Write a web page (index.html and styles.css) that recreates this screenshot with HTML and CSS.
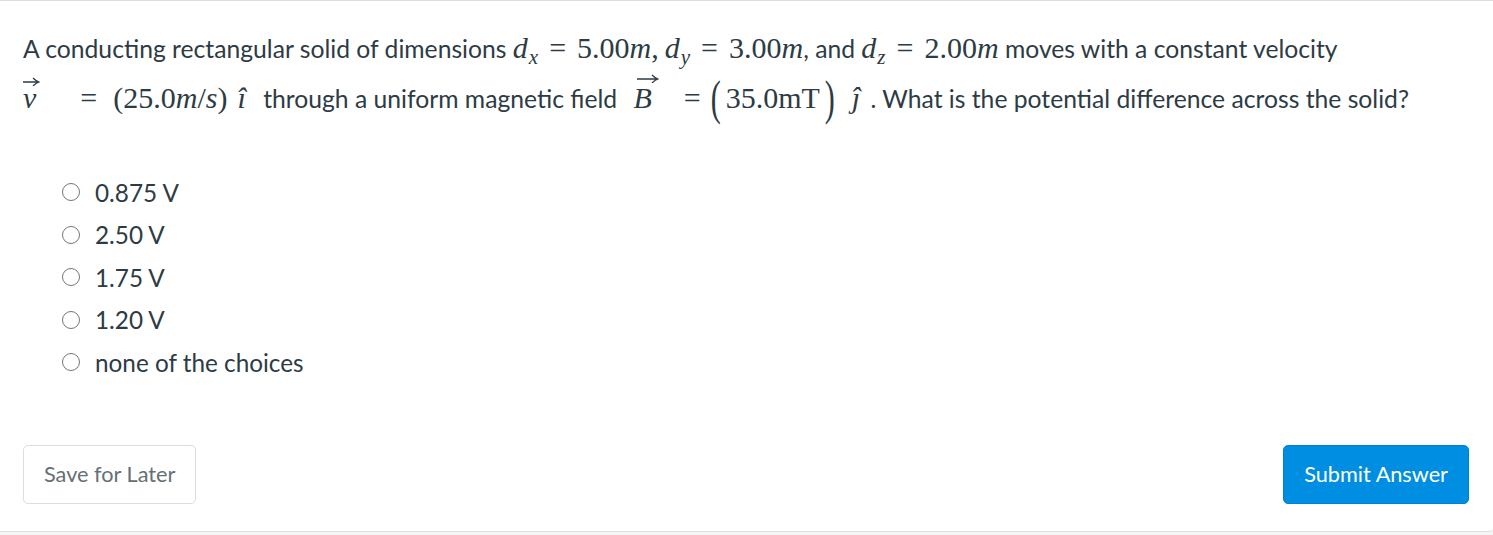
FILE: index.html
```html
<!DOCTYPE html>
<html lang="en">

<head>
    <meta charset="UTF-8">
    <title>Question</title>
    <link rel="stylesheet" href="styles.css">
</head>

<body>
    <div class="card">
        <div class="question-text">
            <p>
                A conducting rectangular solid of dimensions
                <span class="math"><i>d</i><sub><i>x</i></sub><span class="eq">=</span>5.00<i>m</i>,&thinsp;<i>d</i><sub><i>y</i></sub><span class="eq">=</span>3.00<i>m</i></span>,
                and <span class="math"><i>d</i><sub><i>z</i></sub><span class="eq">=</span>2.00<i>m</i></span> moves with a constant velocity
                <br>
                <span class="math"><span class="vec v"><i>v</i><svg class="arrow" width="17" height="9" viewBox="0 0 17 9"><path d="M0 5 H15 M10 1 Q13 4 16 5 Q13 6 10 9" fill="none" stroke="#2d3b45" stroke-width="1.3"/></svg></span><span class="eq wide">=</span>(25.0<i>m</i>/<i>s</i>)<i class="hat i">î</i></span>
                <span class="after-hat">through a uniform magnetic field</span>
                <span class="math b-math"><span class="vec b"><i>B</i><svg class="arrow" width="22" height="9" viewBox="0 0 22 9"><path d="M0 5 H20 M15 1 Q18 4 21 5 Q18 6 15 9" fill="none" stroke="#2d3b45" stroke-width="1.3"/></svg></span><span class="eq b-eq">=</span><span class="big">(</span>35.0mT<span class="big">)</span><i class="hat j">ĵ</i></span>
                <span class="after-j">. What is the potential difference across the solid?</span>
            </p>
        </div>

        <div class="answers">
            <label><input type="radio" name="q1" value="a"> 0.875 V</label>
            <label><input type="radio" name="q1" value="b"> 2.50 V</label>
            <label><input type="radio" name="q1" value="c"> 1.75 V</label>
            <label><input type="radio" name="q1" value="d"> 1.20 V</label>
            <label><input type="radio" name="q1" value="e"> none of the choices</label>
        </div>

        <div class="actions">
            <button class="btn">Save for Later</button>
            <button class="btn primary">Submit Answer</button>
        </div>
    </div>
</body>

</html>
```

FILE: styles.css
```css
body {
    margin: 0;
    font-family: Lato, "Open Sans", sans-serif;
    color: #2d3b45;
    background-color: #f5f5f5;
}

.card {
    background: white;
    border-top: 1px solid #dddddd;
    border-bottom: 1px solid #dddddd;
    border-bottom-right-radius: 4px;
    height: 530px;
}

.question-text {
    padding: 22px 23px 0 23px;
    font-size: 24.7px;
}

.question-text p {
    margin: 0;
    line-height: 49px;
}

.math {
    font-family: "Liberation Serif", "DejaVu Serif", serif;
    font-size: 30px;
    white-space: nowrap;
}

.math sub {
    font-size: 21px;
    vertical-align: -6px;
    line-height: 0;
    margin-left: 1px;
}

.math .eq {
    margin: 0 11px;
}

.math .eq.wide {
    margin: 0 16px 0 44px;
}

.math .eq.b-eq {
    margin: 0 5px 0 32px;
}

.vec {
    position: relative;
    display: inline-block;
    line-height: 1;
}

/* arrow sits over the letter */
.vec .arrow {
    position: absolute;
    left: 0;
    top: -6px;
}

.vec.b .arrow {
    left: 4px;
    top: -9px;
}

.b-math {
    margin-left: 10px;
}

.hat.i {
    margin-left: 10px;
}

.hat.j {
    margin-left: 12px;
}

.after-hat {
    margin-left: 11px;
}

.big {
    display: inline-block;
    font-size: 30px;
    transform: scaleY(1.6);
    line-height: 1;
    margin: 0 5px;
}

.after-j {
    margin-left: 4px;
}

.answers {
    display: flex;
    flex-direction: column;
    padding: 48px 0 0 62px;
}

.answers label {
    font-size: 24.3px;
    height: 42.5px;
    display: flex;
    align-items: center;
}

input[type="radio"] {
    appearance: none;
    width: 18px;
    height: 18px;
    border: 1.5px solid #767676;
    border-radius: 50%;
    margin: 0 15px 0 0;
    box-sizing: border-box;
}

.actions {
    display: flex;
    justify-content: space-between;
    padding: 61px 24px 0 23px;
}

.btn {
    font-family: Lato, sans-serif;
    font-size: 21.7px;
    height: 59px;
    padding: 0 20px;
    background: white;
    color: #666f76;
    border: 1px solid #dddddd;
    border-radius: 5px;
    cursor: pointer;
}

.btn.primary {
    background-color: #008ee2;
    border-color: #0081cc;
    color: white;
}
```
